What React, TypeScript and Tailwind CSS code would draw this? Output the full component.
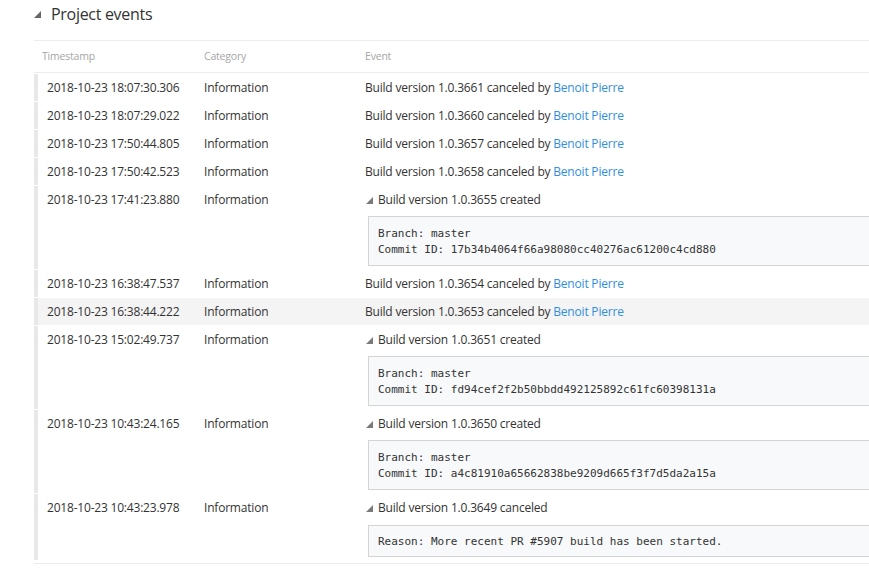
import React from "react";

type EventRow = {
  time: string;
  version: string;
  kind: "canceledBy" | "created" | "canceled";
  lines?: string[];
  hover?: boolean;
};

const rows: EventRow[] = [
  { time: "2018-10-23 18:07:30.306", version: "1.0.3661", kind: "canceledBy" },
  { time: "2018-10-23 18:07:29.022", version: "1.0.3660", kind: "canceledBy" },
  { time: "2018-10-23 17:50:44.805", version: "1.0.3657", kind: "canceledBy" },
  { time: "2018-10-23 17:50:42.523", version: "1.0.3658", kind: "canceledBy" },
  {
    time: "2018-10-23 17:41:23.880",
    version: "1.0.3655",
    kind: "created",
    lines: ["Branch: master", "Commit ID: 17b34b4064f66a98080cc40276ac61200c4cd880"],
  },
  { time: "2018-10-23 16:38:47.537", version: "1.0.3654", kind: "canceledBy" },
  { time: "2018-10-23 16:38:44.222", version: "1.0.3653", kind: "canceledBy", hover: true },
  {
    time: "2018-10-23 15:02:49.737",
    version: "1.0.3651",
    kind: "created",
    lines: ["Branch: master", "Commit ID: fd94cef2f2b50bbdd492125892c61fc60398131a"],
  },
  {
    time: "2018-10-23 10:43:24.165",
    version: "1.0.3650",
    kind: "created",
    lines: ["Branch: master", "Commit ID: a4c81910a65662838be9209d665f3f7d5da2a15a"],
  },
  {
    time: "2018-10-23 10:43:23.978",
    version: "1.0.3649",
    kind: "canceled",
    lines: ["Reason: More recent PR #5907 build has been started."],
  },
];

function Caret({ className }: { className?: string }) {
  return (
    <svg width="7" height="7" viewBox="0 0 7 7" className={className}>
      <polygon points="7,0 7,7 0,7" fill="currentColor" />
    </svg>
  );
}

function EventCell({ row }: { row: EventRow }) {
  if (row.kind === "canceledBy") {
    return (
      <div className="flex h-[27px] items-center whitespace-pre">
        Build version {row.version} canceled by <span className="text-[#2f8fdb]">Benoit Pierre</span>
      </div>
    );
  }
  const single = (row.lines?.length ?? 0) < 2;
  return (
    <div className="pb-[3px]">
      <div className="flex h-[27px] items-center pt-[1px]">
        <Caret className="mr-[5px] ml-[1px] text-[#7a7a7a]" />
        Build version {row.version} {row.kind === "created" ? "created" : "canceled"}
      </div>
      <div
        className={`ml-[3px] border border-[#d4d4d4] bg-[#f8f9fa] pl-[9px] font-['DejaVu_Sans_Mono',monospace] text-[11px] leading-[16px] tracking-normal text-[#333] ${
          single ? "mt-[4px] pt-[8px] pb-[6px]" : "mt-[3px] pt-[9px] pb-[7px]"
        }`}
      >
        {row.lines?.map((l) => (
          <div key={l} className="whitespace-pre">
            {l}
          </div>
        ))}
      </div>
    </div>
  );
}

export default function App() {
  return (
    <div className="h-[568px] w-[869px] overflow-hidden bg-white font-['Open_Sans',sans-serif] text-[#333]">
      <div className="w-[1000px] pl-[34px]">
        <div className="flex h-[28px] items-center">
          <Caret className="text-[#666]" />
          <span className="ml-[10px] text-[16px] tracking-[-0.3px] text-[#333]">Project events</span>
        </div>

        <div className="mt-[12px] border-t border-[#ececec]">
          <div className="grid h-[32px] grid-cols-[162px_161px_1fr] items-center border-b border-[#ececec] text-[10.5px] tracking-[-0.2px] text-[#a6a6a6]">
            <div className="pl-[8px]">Timestamp</div>
            <div className="pl-[8px]">Category</div>
            <div className="pl-[8px]">Event</div>
          </div>

          <div className="text-[12px] tracking-[-0.2px]">
            {rows.map((row) => (
              <div
                key={row.time}
                className={`mt-[1px] grid grid-cols-[162px_161px_1fr] ${row.hover ? "bg-[#f4f4f4]" : ""}`}
              >
                <div className="border-l-4 border-[#e8e8e8] pl-[9px]">
                  <div className="flex h-[27px] items-center pt-[1px]">{row.time}</div>
                </div>
                <div className="pl-[8px]">
                  <div className="flex h-[27px] items-center pt-[1px]">Information</div>
                </div>
                <div className="pl-[8px]">
                  <EventCell row={row} />
                </div>
              </div>
            ))}
          </div>
          <div className="mt-[3px] border-b border-[#ececec]" />
        </div>
      </div>
    </div>
  );
}
